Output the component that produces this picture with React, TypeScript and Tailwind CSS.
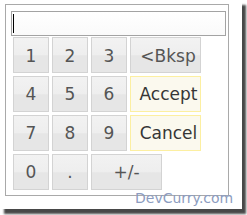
import React from 'react'

const font = { fontFamily: '"DejaVu Sans", Verdana, sans-serif' }

const keyBase =
  'flex items-center justify-center h-[36px] border text-[17px] leading-none select-none'
const defaultKey =
  'border-[#d3d3d3] text-[#555555] bg-[linear-gradient(to_bottom,#f2f2f2_0%,#eeeeee_50%,#e6e6e6_52%,#e6e6e6_100%)]'
const highlightKey = 'border-[#fcefa1] text-[#363636] bg-[#fbf9ee]'

function Key({ label, wide, highlight, textClass = '' }: { label: string; wide?: boolean; highlight?: boolean; textClass?: string }) {
  return (
    <div className={`${keyBase} ${wide ? 'w-[71px]' : 'w-[36px]'} ${highlight ? highlightKey : defaultKey} ${textClass}`}>
      {label}
    </div>
  )
}

export default function App() {
  return (
    <div className="w-[247px] h-[215px] bg-white overflow-hidden relative" style={font}>
      <div className="w-[242px] h-[209px] bg-white shadow-[4px_5px_2px_rgba(40,40,40,0.85)] pt-[4px] pl-[5px]">
        <div className="w-[224px] h-[192px] border border-[#a9a9a9] bg-white pl-[5px] pt-[6px]">
          <div className="w-[215px] h-[25px] border border-[#a3a3a3] bg-[linear-gradient(to_bottom,#ffffff,#fafafa)] flex items-center pl-[1px]">
            <span className="block w-[1px] h-[19px] bg-black" />
          </div>
          <div className="ml-[2px] mt-[1px] flex flex-col gap-[3px]">
            <div className="flex gap-[3px]">
              <Key label="1" textClass="pt-[3px]" />
              <Key label="2" textClass="pt-[3px]" />
              <Key label="3" textClass="pt-[3px]" />
              <Key label="<Bksp" wide textClass="pt-[3px] pl-[5px]" />
            </div>
            <div className="flex gap-[3px]">
              <Key label="4" />
              <Key label="5" />
              <Key label="6" />
              <Key label="Accept" wide highlight textClass="pl-[6px]" />
            </div>
            <div className="flex gap-[3px]">
              <Key label="7" />
              <Key label="8" />
              <Key label="9" />
              <Key label="Cancel" wide highlight textClass="pl-[6px]" />
            </div>
            <div className="flex gap-[3px]">
              <Key label="0" />
              <Key label="." />
              <Key label="+/-" wide />
            </div>
          </div>
        </div>
      </div>
      <div className="absolute left-[135px] top-[191px] text-[14px] leading-none text-[#8c9cc0]">DevCurry.com</div>
    </div>
  )
}
